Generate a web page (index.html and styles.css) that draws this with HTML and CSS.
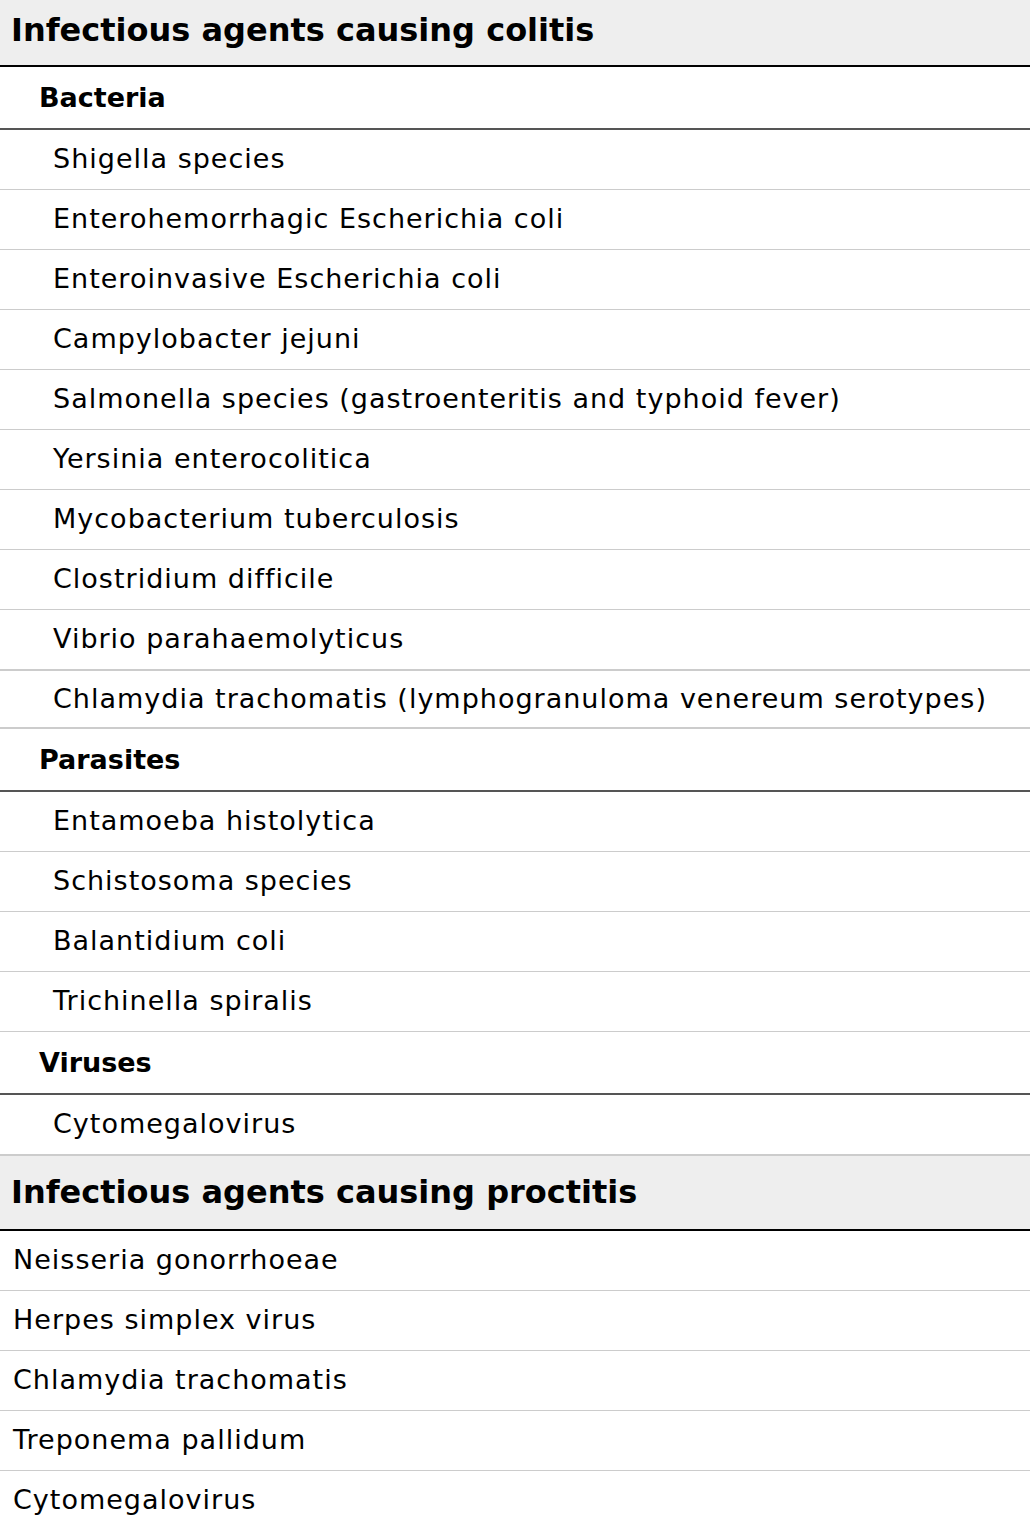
FILE: index.html
```html
<!DOCTYPE html>
<html>
<head>
<meta charset="utf-8">
<link rel="stylesheet" href="styles.css">
</head>
<body>
<div class="table">
  <div class="title title-first">Infectious agents causing colitis</div>
  <div class="group">Bacteria</div>
  <div class="item">Shigella species</div>
  <div class="item">Enterohemorrhagic Escherichia coli</div>
  <div class="item">Enteroinvasive Escherichia coli</div>
  <div class="item">Campylobacter jejuni</div>
  <div class="item">Salmonella species (gastroenteritis and typhoid fever)</div>
  <div class="item">Yersinia enterocolitica</div>
  <div class="item">Mycobacterium tuberculosis</div>
  <div class="item">Clostridium difficile</div>
  <div class="item">Vibrio parahaemolyticus</div>
  <div class="item item-split">Chlamydia trachomatis (lymphogranuloma venereum serotypes)</div>
  <div class="group">Parasites</div>
  <div class="item">Entamoeba histolytica</div>
  <div class="item">Schistosoma species</div>
  <div class="item">Balantidium coli</div>
  <div class="item">Trichinella spiralis</div>
  <div class="group">Viruses</div>
  <div class="item item-last">Cytomegalovirus</div>
  <div class="title title-second">Infectious agents causing proctitis</div>
  <div class="item flat">Neisseria gonorrhoeae</div>
  <div class="item flat">Herpes simplex virus</div>
  <div class="item flat">Chlamydia trachomatis</div>
  <div class="item flat">Treponema pallidum</div>
  <div class="item flat">Cytomegalovirus</div>
</div>
</body>
</html>
```
FILE: styles.css
```css
html, body {
  margin: 0;
  padding: 0;
  background: #ffffff;
}
body {
  font-family: "DejaVu Sans", Verdana, sans-serif;
  color: #000000;
}
.table {
  display: flex;
  flex-direction: column;
  width: 1030px;
}
.title {
  background: #eeeeee;
  font-weight: bold;
  font-size: 32px;
  padding-left: 11px;
  border-bottom: 2px solid #000000;
  flex: none;
}
.title-first {
  height: 65px;
  line-height: 60px;
}
.title-second {
  height: 73px;
  line-height: 73px;
}
.group {
  font-weight: bold;
  font-size: 27px;
  height: 61px;
  line-height: 62px;
  padding-left: 39px;
  border-bottom: 2px solid #555555;
  flex: none;
}
.item {
  font-size: 27px;
  letter-spacing: 1px;
  height: 59px;
  line-height: 58px;
  padding-left: 53px;
  border-bottom: 1px solid #cccccc;
  flex: none;
}
.item-split {
  border-top: 1px solid #cccccc;
  height: 56px;
  line-height: 56px;
  border-bottom: 2px solid #cccccc;
}
.item-last {
  border-bottom: 2px solid #cccccc;
}
.flat {
  padding-left: 13px;
}
```
